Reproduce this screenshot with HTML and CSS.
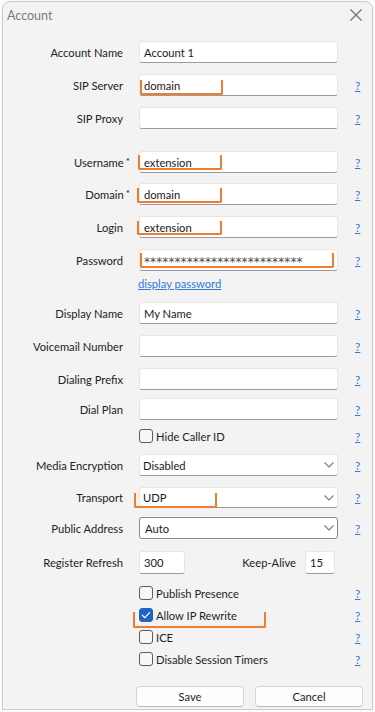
FILE: index.html
```html
<!DOCTYPE html>
<html>
<head>
<meta charset="utf-8">
<link rel="stylesheet" href="styles.css">
</head>
<body>
<div class="window">
  <div class="titlebar">
    <span class="title">Account</span>
    <svg class="close" width="12" height="12" viewBox="0 0 12 12"><path d="M0.5 0.5 L11.5 11.5 M11.5 0.5 L0.5 11.5" stroke="#6a6a6a" stroke-width="1.1" fill="none"/></svg>
  </div>
  <div class="content">
    <div class="row r-first">
      <label class="lbl">Account Name</label>
      <div class="field"><div class="input">Account 1</div></div>
      <span></span>
    </div>
    <div class="row">
      <label class="lbl">SIP Server</label>
      <div class="field"><div class="input">domain</div><span class="mark m-sip"></span></div>
      <a class="help">?</a>
    </div>
    <div class="row">
      <label class="lbl">SIP Proxy</label>
      <div class="field"><div class="input"></div></div>
      <a class="help">?</a>
    </div>

    <div class="row r-group">
      <label class="lbl">Username<span class="req">*</span></label>
      <div class="field"><div class="input">extension</div><span class="mark m-user"></span></div>
      <a class="help">?</a>
    </div>
    <div class="row r-domain">
      <label class="lbl">Domain<span class="req">*</span></label>
      <div class="field"><div class="input">domain</div><span class="mark m-domain"></span></div>
      <a class="help">?</a>
    </div>
    <div class="row">
      <label class="lbl">Login</label>
      <div class="field"><div class="input">extension</div><span class="mark m-login"></span></div>
      <a class="help">?</a>
    </div>
    <div class="row">
      <label class="lbl">Password</label>
      <div class="field"><div class="input pw">**************************</div><span class="mark m-pw"></span></div>
      <a class="help">?</a>
    </div>
    <div class="row r-link">
      <span></span>
      <a class="link">display password</a>
      <span></span>
    </div>

    <div class="row r-after-link">
      <label class="lbl">Display Name</label>
      <div class="field"><div class="input">My Name</div></div>
      <a class="help">?</a>
    </div>
    <div class="row">
      <label class="lbl">Voicemail Number</label>
      <div class="field"><div class="input"></div></div>
      <a class="help">?</a>
    </div>
    <div class="row">
      <label class="lbl">Dialing Prefix</label>
      <div class="field"><div class="input"></div></div>
      <a class="help">?</a>
    </div>
    <div class="row r-dialplan">
      <label class="lbl">Dial Plan</label>
      <div class="field"><div class="input"></div></div>
      <a class="help">?</a>
    </div>
    <div class="row r-hide">
      <span></span>
      <div class="check"><span class="box"></span><span>Hide Caller ID</span></div>
      <a class="help">?</a>
    </div>

    <div class="row r-media">
      <label class="lbl">Media Encryption</label>
      <div class="field"><div class="input select">Disabled<svg class="chev" width="10" height="6" viewBox="0 0 10 6"><path d="M0.5 0.5 L5 5 L9.5 0.5" stroke="#7a7a7a" stroke-width="1.1" fill="none"/></svg></div></div>
      <a class="help">?</a>
    </div>
    <div class="row r-transport">
      <label class="lbl">Transport</label>
      <div class="field"><div class="input select">UDP<svg class="chev" width="10" height="6" viewBox="0 0 10 6"><path d="M0.5 0.5 L5 5 L9.5 0.5" stroke="#7a7a7a" stroke-width="1.1" fill="none"/></svg></div><span class="mark m-transport"></span></div>
      <a class="help">?</a>
    </div>
    <div class="row r-public">
      <label class="lbl">Public Address</label>
      <div class="field"><div class="input select focus">Auto<svg class="chev" width="10" height="6" viewBox="0 0 10 6"><path d="M0.5 0.5 L5 5 L9.5 0.5" stroke="#7a7a7a" stroke-width="1.1" fill="none"/></svg></div></div>
      <a class="help">?</a>
    </div>
    <div class="row r-register">
      <label class="lbl">Register Refresh</label>
      <div class="split">
        <div class="input small">300</div>
        <div class="keep"><span class="lbl2">Keep-Alive</span><div class="input tiny">15</div></div>
      </div>
      <span></span>
    </div>

    <div class="row r-cb1">
      <span></span>
      <div class="check"><span class="box"></span><span>Publish Presence</span></div>
      <a class="help">?</a>
    </div>
    <div class="row r-cb">
      <span></span>
      <div class="check field"><span class="box on"><svg width="10" height="8" viewBox="0 0 10 8"><path d="M1 4 L3.8 6.6 L9 1.2" stroke="#ffffff" stroke-width="1.2" fill="none"/></svg></span><span>Allow IP Rewrite</span><span class="mark m-allow"></span></div>
      <a class="help">?</a>
    </div>
    <div class="row r-cb">
      <span></span>
      <div class="check"><span class="box"></span><span>ICE</span></div>
      <a class="help">?</a>
    </div>
    <div class="row r-cb">
      <span></span>
      <div class="check"><span class="box"></span><span>Disable Session Timers</span></div>
      <a class="help">?</a>
    </div>

    <div class="buttons">
      <button class="btn">Save</button>
      <button class="btn">Cancel</button>
    </div>
  </div>
</div>
</body>
</html>
```
FILE: styles.css
```css
html, body {
  margin: 0;
  padding: 0;
  background: #fbfbfb;
}
body {
  width: 375px;
  height: 712px;
  overflow: hidden;
  font-family: "Lato", "Noto Sans", sans-serif;
  font-size: 11.2px;
  color: #1f1f1f;
}
.window {
  margin: 1px 2px 0 2px;
  height: 709px;
  border: 1px solid #cbcbcb;
  border-radius: 8px 8px 0 0;
  background: #f3f3f3;
  box-sizing: border-box;
  width: 371px;
}
.titlebar {
  height: 27px;
  display: flex;
  align-items: center;
  justify-content: space-between;
  padding: 0 10px 0 4px;
}
.title {
  color: #7b7b7b;
  font-size: 12.5px;
  margin-top: -1px;
}
.close {
  margin-top: -2px;
}
.content {
  display: flex;
  flex-direction: column;
}
.row {
  display: grid;
  grid-template-columns: 120px 199px 1fr;
  column-gap: 16px;
  align-items: center;
  height: 22px;
  margin-top: 11px;
}
.r-first { margin-top: 12px; }
.r-group { margin-top: 22px; }
.r-domain { margin-top: 10px; }
.r-link { margin-top: 4px; height: 16px; }
.r-after-link { margin-top: 11px; }
.r-dialplan { margin-top: 8px; }
.r-hide { margin-top: 5px; }
.r-media { margin-top: 7px; }
.r-transport { margin-top: 11px; height: 21px; }
.r-public { margin-top: 9px; }
.r-register { margin-top: 12px; height: 23px; }
.r-cb1 { margin-top: 8px; }
.r-cb { margin-top: 0; }
.lbl {
  text-align: right;
  color: #222;
  white-space: nowrap;
}
.req {
  font-size: 10px;
  margin-left: 2px;
  margin-right: -7px;
  position: relative;
  top: -2px;
}
.field {
  position: relative;
  height: 100%;
}
.input {
  box-sizing: border-box;
  height: 100%;
  background: #ffffff;
  border: 1px solid #e6e6e6;
  border-bottom-color: #9b9b9b;
  border-radius: 3px;
  padding: 0 4px;
  display: flex;
  align-items: center;
  color: #1a1a1a;
}
.pw {
  color: #4a4a4a;
  font-family: "DejaVu Sans", sans-serif;
  font-size: 12px;
  letter-spacing: 0.1px;
  padding-top: 4px;
}
.select {
  justify-content: space-between;
  padding: 0 3px 0 3px;
}
.focus {
  border-color: #8a8a8a;
  padding-left: 5px;
}
.chev { flex: none; }
.help {
  color: #2f7bd8;
  text-decoration: underline;
  font-size: 12px;
  padding-left: 1px;
}
.link {
  color: #2f7bd8;
  text-decoration: underline;
  margin-left: -1px;
}
.mark {
  position: absolute;
  border: 2px solid #ef7d2f;
  border-top: none;
  border-radius: 0 0 2px 2px;
  box-sizing: border-box;
}
.m-sip { left: 1px; top: 6px; width: 83px; height: 15px; }
.m-user { left: -1px; top: 4px; width: 84px; height: 15px; }
.m-domain { left: -2px; top: 5px; width: 85px; height: 15px; }
.m-login { left: -2px; top: 5px; width: 85px; height: 14px; }
.m-pw { left: 1px; top: 4px; width: 194px; height: 15px; }
.m-transport { left: -5px; top: 6px; width: 83px; height: 15px; }
.m-allow { left: -6px; top: 8px; width: 133px; height: 16px; }
.check {
  display: flex;
  align-items: center;
  gap: 3px;
  height: 100%;
  color: #1f1f1f;
}
.box {
  box-sizing: border-box;
  width: 14px;
  height: 14px;
  border: 1px solid #5c5c5c;
  border-radius: 3px;
  background: #f7f7f7;
  display: flex;
  align-items: center;
  justify-content: center;
  flex: none;
}
.box.on {
  background: #1f64c4;
  border-color: #1f64c4;
}
.split {
  display: flex;
  justify-content: space-between;
  align-items: center;
  height: 100%;
  padding-right: 3px;
}
.input.small { width: 46px; }
.keep {
  display: flex;
  align-items: center;
  gap: 9px;
  height: 100%;
}
.lbl2 { color: #222; }
.input.tiny { width: 30px; }
.buttons {
  display: flex;
  gap: 11px;
  padding-left: 133px;
  margin-top: 16px;
}
.btn {
  width: 108px;
  height: 21px;
  background: #fdfdfd;
  border: 1px solid #d6d6d6;
  border-bottom-color: #bcbcbc;
  border-radius: 4px;
  font-family: "Lato", "Noto Sans", sans-serif;
  font-size: 11.2px;
  color: #1f1f1f;
  padding: 0;
}
```
